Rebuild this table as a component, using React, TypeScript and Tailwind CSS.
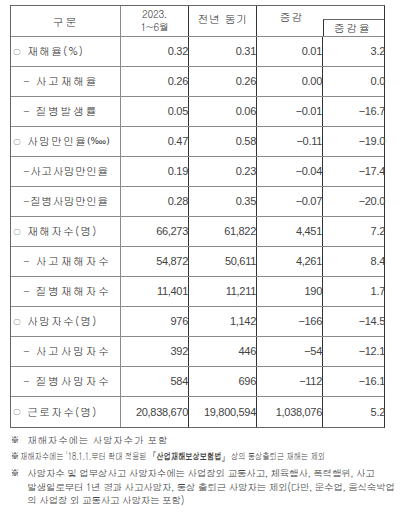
import React from "react";

type Row = { label: string; level: 0 | 1 | 2; values: string[] };

const rows: Row[] = [
  { label: "재해율(%)", level: 0, values: ["0.32", "0.31", "0.01", "3.2"] },
  { label: "사고재해율", level: 1, values: ["0.26", "0.26", "0.00", "0.0"] },
  { label: "질병발생률", level: 1, values: ["0.05", "0.06", "−0.01", "−16.7"] },
  { label: "사망만인율", level: 0, values: ["0.47", "0.58", "−0.11", "−19.0"] },
  { label: "사고사망만인율", level: 2, values: ["0.19", "0.23", "−0.04", "−17.4"] },
  { label: "질병사망만인율", level: 2, values: ["0.28", "0.35", "−0.07", "−20.0"] },
  { label: "재해자수(명)", level: 0, values: ["66,273", "61,822", "4,451", "7.2"] },
  { label: "사고재해자수", level: 1, values: ["54,872", "50,611", "4,261", "8.4"] },
  { label: "질병재해자수", level: 1, values: ["11,401", "11,211", "190", "1.7"] },
  { label: "사망자수(명)", level: 0, values: ["976", "1,142", "−166", "−14.5"] },
  { label: "사고사망자수", level: 1, values: ["392", "446", "−54", "−12.1"] },
  { label: "질병사망자수", level: 1, values: ["584", "696", "−112", "−16.1"] },
  { label: "근로자수(명)", level: 0, values: ["20,838,670", "19,800,594", "1,038,076", "5.2"] },
];

const kr = "font-['Gulim','Noto_Sans_CJK_KR',sans-serif]";

function Label({ row }: { row: Row }) {
  if (row.level === 0) {
    return (
      <div className="flex items-center pl-[2px] tracking-[1px]">
        <span className="text-[8px] mr-[5px] leading-none">○</span>
        <span>{row.label}</span>
        {row.label === "사망만인율" && (
          <span className="text-[9px] tracking-normal font-['DejaVu_Sans',sans-serif]">(‱)</span>
        )}
      </div>
    );
  }
  if (row.level === 1) {
    return (
      <div className="pl-[12px] tracking-[1.5px]">
        <span className="mr-[4px]">-</span>
        {row.label}
      </div>
    );
  }
  return (
    <div className="pl-[12px] tracking-[0.2px]">
      <span>-</span>
      {row.label}
    </div>
  );
}

export default function App() {
  return (
    <div className={`w-[400px] h-[526px] bg-white text-[#333] ${kr}`}>
      <div className="pt-[5px] pl-[10px]">
        <div className="w-[375px] border border-[#666] border-r-[#333]">
          {/* header */}
          <div className="flex h-[31px] border-b border-[#8a8a8a] text-[11px]">
            <div className="w-[110px] border-r border-[#8a8a8a] flex items-center justify-center tracking-[2px] pt-[2px]">
              구분
            </div>
            <div className="w-[68px] border-r border-[#333] flex flex-col items-center justify-center text-[10px] tracking-[-0.3px]">
              <span className="leading-[12px]">2023.</span>
              <span className="leading-[14px]">1~6월</span>
            </div>
            <div className="w-[68px] border-r border-[#333] flex items-center justify-center tracking-[0.5px] pb-[3px]">
              전년 동기
            </div>
            <div className="w-[66px] flex justify-center pt-[3px] pl-[3px] tracking-[1px]">증감</div>
            <div className="flex-1 flex flex-col">
              <div className="h-[16px]" />
              <div className="flex-1 border-t border-l border-[#333] border-t-[#666] flex items-center justify-center tracking-[1.5px] pr-[3px]">
                증감율
              </div>
            </div>
          </div>

          {/* body */}
          {rows.map((row, i) => (
            <div
              key={row.label}
              className={`flex h-[30px] text-[11px] ${i < rows.length - 1 ? "border-b border-[#8a8a8a]" : ""}`}
            >
              <div className="w-[110px] border-r border-[#8a8a8a] flex items-center">
                <Label row={row} />
              </div>
              {row.values.map((v, j) => (
                <div
                  key={j}
                  className={`${
                    j === 0 || j === 1 ? "w-[68px]" : j === 2 ? "w-[66px]" : "flex-1"
                  } ${j < 3 ? "border-r border-[#333]" : ""} flex items-center justify-end font-['Liberation_Sans',sans-serif] tracking-[-0.3px] text-[#444] ${
                    j === 3 ? "-mr-[1px]" : ""
                  }`}
                >
                  {v}
                </div>
              ))}
            </div>
          ))}
        </div>

        {/* notes */}
        <div className="mt-[4px] text-[10px] text-[#444] leading-[13.5px]">
          <div className="flex h-[17px] items-center">
            <span className="w-[17px]">※</span>
            <span className="tracking-[0.3px]">재해자수에는 사망자수가 포함</span>
          </div>
          <div className="flex h-[16px] items-center whitespace-nowrap">
            <span className="w-[17px]">※</span>
            <span className="inline-block origin-left scale-x-[0.74] tracking-[-0.2px]">
              재해자수에는 '18.1.1.부터 확대 적용된 <span className="font-bold">「산업재해보상보험법」</span> 상의 통상출퇴근 재해는 제외
            </span>
          </div>
          <div className="flex pt-[2px] whitespace-nowrap">
            <span className="w-[17px] shrink-0">※</span>
            <div className="tracking-[-0.65px]">
              <div>사망자수 및 업무상사고 사망자수에는 사업장외 교통사고, 체육행사, 폭력행위, 사고</div>
              <div>발생일로부터 1년 경과 사고사망자, 통상 출퇴근 사망자는 제외(다만, 운수업, 음식숙박업</div>
              <div>의 사업장 외 교통사고 사망자는 포함)</div>
            </div>
          </div>
        </div>
      </div>
    </div>
  );
}
